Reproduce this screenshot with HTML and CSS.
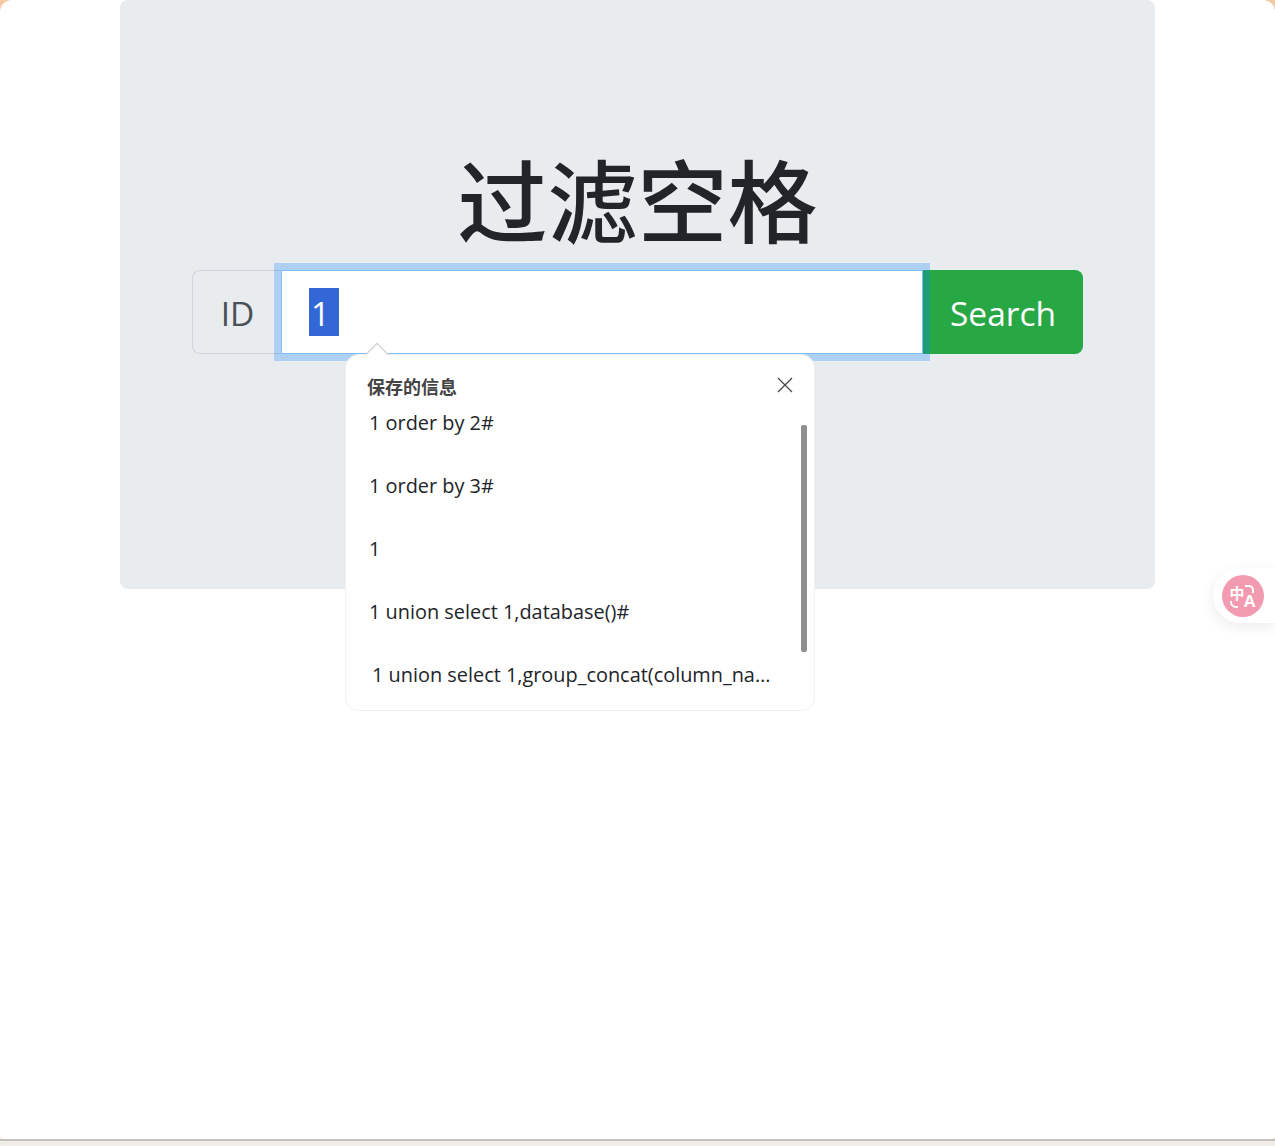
FILE: index.html
```html
<!DOCTYPE html>
<html lang="zh">
<head>
<meta charset="utf-8">
<title>过滤空格</title>
<link rel="stylesheet" href="styles.css">
</head>
<body>
<div class="window">
  <main class="jumbotron">
    <h1 class="title">过滤空格</h1>
    <form class="input-group">
      <span class="addon">ID</span>
      <div class="field"><span class="selected">1 </span></div>
      <button class="search" type="button">Search</button>
      <div class="popup">
        <span class="arrow"></span>
        <div class="popup-head">
          <span class="popup-title">保存的信息</span>
          <svg class="close" viewBox="0 0 16 16" width="16" height="16"><path d="M1 1L15 15M15 1L1 15" stroke="#444" stroke-width="1.2" fill="none"/></svg>
        </div>
        <ul class="saved">
          <li>1 order by 2#</li>
          <li>1 order by 3#</li>
          <li>1</li>
          <li>1 union select 1,database()#</li>
          <li class="indented">1 union select 1,group_concat(column_name) from information_schema.columns#</li>
        </ul>
        <span class="thumb"></span>
      </div>
    </form>
  </main>
  <aside class="translate">
    <svg viewBox="0 0 42 42" width="42" height="42">
      <circle cx="21" cy="21" r="21" fill="#f29ab0"/>
      <text x="7.5" y="23.5" class="zh">中</text>
      <text x="21.5" y="32" class="en">A</text>
      <path d="M23 11h4a4 4 0 0 1 4 4v3M9 26v1a5 5 0 0 0 5 5h2" stroke="#fff" stroke-width="2" fill="none"/>
    </svg>
  </aside>
</div>
<div class="statusline"></div>
</body>
</html>
```
FILE: styles.css
```css
* { box-sizing: border-box; }
html, body { margin: 0; height: 100%; }
body {
  background: #f5c9a2;
  font-family: "Open Sans", "Noto Sans CJK SC", sans-serif;
  color: #212529;
  display: flex;
  flex-direction: column;
  height: 1146px;
  overflow: hidden;
}
.window {
  position: relative;
  height: 1139px;
  flex: none;
  background: #fff;
  border-radius: 12px 12px 2px 2px;
  padding: 0 120px;
}
.statusline {
  flex: 1;
  background: #f0ece8;
  border-top: 2px solid #c4bfbb;
}
.jumbotron {
  height: 589px;
  background: #e9ecef;
  border-radius: 8px;
  padding: 140px 72px 0;
}
.title {
  margin: 0 0 16px;
  height: 114px;
  line-height: 114px;
  font-size: 90px;
  font-weight: 500;
  text-align: center;
  font-family: "Noto Sans CJK SC", sans-serif;
}
.input-group {
  position: relative;
  display: flex;
  height: 84px;
}
.addon {
  width: 90px;
  flex: none;
  border: 1px solid #ced4da;
  border-right: 0;
  border-radius: 8px 0 0 8px;
  color: #495057;
  font-size: 33.5px;
  padding-top: 2px;
  display: flex;
  align-items: center;
  justify-content: center;
}
.field {
  position: relative;
  z-index: 2;
  width: 642px;
  flex: none;
  margin-left: -1px;
  background: #fff;
  border: 1px solid #80bdff;
  box-shadow: 0 0 0 7px rgba(0, 123, 255, .25);
  padding: 17px 0 0 27px;
  font-size: 33px;
  line-height: 48px;
}
.selected {
  display: inline-block;
  vertical-align: top;
  width: 30px;
  height: 48px;
  padding-left: 2px;
  background: #3367d6;
  color: #fff;
  line-height: 52px;
  white-space: pre;
}
.search {
  width: 160px;
  flex: none;
  border: 0;
  background: #28a745;
  color: #fff;
  font: inherit;
  font-size: 33.5px;
  border-radius: 0 8px 8px 0;
  padding: 2px 0 0;
}
.popup {
  position: absolute;
  z-index: 3;
  left: 153px;
  top: 84px;
  width: 470px;
  height: 357px;
  background: #fff;
  border: 1px solid #f1f1f1;
  border-radius: 14px;
  padding: 20px 0 0 21px;
}
.arrow {
  position: absolute;
  left: 23px;
  top: -9px;
  width: 16px;
  height: 16px;
  background: #fff;
  border: 1px solid #c8c8c8;
  border-right: 0;
  border-bottom: 0;
  transform: rotate(45deg);
}
.popup-head {
  display: flex;
  justify-content: space-between;
  align-items: center;
  padding-right: 21px;
  height: 22px;
}
.popup-title {
  font-size: 18px;
  font-weight: 700;
  color: #444;
  font-family: "Noto Sans CJK SC", sans-serif;
}
.saved {
  list-style: none;
  margin: 10px 0 0;
  padding: 0 0 0 2px;
  font-size: 19.9px;
}
.saved li {
  height: 63px;
  line-height: 32px;
  width: 407px;
  overflow: hidden;
  white-space: nowrap;
  text-overflow: ellipsis;
}
.saved .indented { padding-left: 3px; }
.thumb {
  position: absolute;
  left: 455px;
  top: 70px;
  width: 6px;
  height: 227px;
  background: #8f8f8f;
  border-radius: 2px;
}
.close { margin-top: -2px; }
.translate {
  position: absolute;
  right: 0;
  top: 568px;
  width: 62px;
  height: 55px;
  background: #fff;
  border-radius: 28px 0 0 28px;
  box-shadow: 0 4px 14px rgba(0, 0, 0, .08);
  padding: 7px 0 0 9px;
}
.translate svg { display: block; }
.zh { font: 700 15px "Noto Sans CJK SC", sans-serif; fill: #fff; }
.en { font: 700 17px "Liberation Sans", sans-serif; fill: #fff; }
```
